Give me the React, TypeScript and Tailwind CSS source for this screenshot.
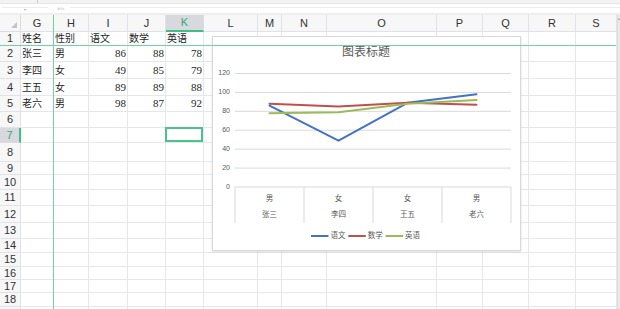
const cols = [
  { k: 'G', w: 'w-[33px]' },
  { k: 'H', w: 'w-[35px]' },
  { k: 'I', w: 'w-[39px]' },
  { k: 'J', w: 'w-[38px]' },
  { k: 'K', w: 'w-[38px]' },
  { k: 'L', w: 'w-[54px]' },
  { k: 'M', w: 'w-[24px]' },
  { k: 'N', w: 'w-[45px]' },
  { k: 'O', w: 'w-[110px]' },
  { k: 'P', w: 'w-[46px]' },
  { k: 'Q', w: 'w-[46px]' },
  { k: 'R', w: 'w-[47px]' },
  { k: 'S', w: 'w-[41px]' },
]

const rowHeights = [
  'h-[14px]', 'h-[16px]', 'h-[17px]', 'h-[17px]', 'h-[16px]', 'h-[16px]', 'h-[15px]', 'h-[19px]', 'h-[13px]',
  'h-[15px]', 'h-[16px]', 'h-[17px]', 'h-[16px]', 'h-[14px]', 'h-[14px]', 'h-[13px]', 'h-[13px]', 'h-[14px]', 'h-[14px]',
]

const sheet: Record<number, string[]> = {
  1: ['姓名', '性别', '语文', '数学', '英语'],
  2: ['张三', '男', '86', '88', '78'],
  3: ['李四', '女', '49', '85', '79'],
  4: ['王五', '女', '89', '89', '88'],
  5: ['老六', '男', '98', '87', '92'],
}

// chart data
const names = ['张三', '李四', '王五', '老六']
const genders = ['男', '女', '女', '男']
const series = [
  { name: '语文', color: '#4472C4', values: [86, 49, 89, 98] },
  { name: '数学', color: '#C0504D', values: [88, 85, 89, 87] },
  { name: '英语', color: '#9BBB59', values: [78, 79, 88, 92] },
]
const x0 = 23
const x1 = 299
const catW = (x1 - x0) / 4
const yOf = (v: number) => 151 - v * 0.9458

const Chart = () => {
  const ticks = [0, 20, 40, 60, 80, 100, 120]
  return (
    <div className="absolute left-[212px] top-[36px] w-[309px] h-[215px] border border-[#d9d9d9] bg-white shadow-[0_1px_2px_rgba(0,0,0,0.12)]">
      <svg
        width="307"
        height="213"
        viewBox="1 1 307 213"
        className="block font-['Liberation_Serif','Noto_Sans_CJK_SC',serif]"
      >
        <text x="154" y="17" fontSize="12" fill="#595959" textAnchor="middle" dominantBaseline="middle">
          图表标题
        </text>
        {ticks.map((t) => (
          <g key={t}>
            <line x1={x0} x2={x1} y1={yOf(t)} y2={yOf(t)} stroke="#d9d9d9" strokeWidth="1" />
            <text
              x="18"
              y={yOf(t)}
              fontSize="7"
              fill="#595959"
              textAnchor="end"
              dominantBaseline="middle"
              className="font-['Liberation_Sans',sans-serif]"
            >
              {t}
            </text>
          </g>
        ))}
        {[0, 1, 2, 3, 4].map((i) => (
          <line key={i} x1={x0 + i * catW} x2={x0 + i * catW} y1="151" y2="187" stroke="#d9d9d9" strokeWidth="1" />
        ))}
        {names.map((n, i) => (
          <g key={n}>
            <text x={x0 + catW * (i + 0.5)} y="163" fontSize="7.5" fill="#595959" textAnchor="middle" dominantBaseline="middle">
              {genders[i]}
            </text>
            <text x={x0 + catW * (i + 0.5)} y="179" fontSize="7.5" fill="#595959" textAnchor="middle" dominantBaseline="middle">
              {n}
            </text>
          </g>
        ))}
        {series.map((s) => (
          <polyline
            key={s.name}
            fill="none"
            stroke={s.color}
            strokeWidth="2"
            strokeLinejoin="round"
            strokeLinecap="round"
            points={s.values.map((v, i) => `${x0 + catW * (i + 0.5)},${yOf(v)}`).join(' ')}
          />
        ))}
        {series.map((s, i) => (
          <g key={s.name}>
            <line x1={99 + i * 37.3} x2={116.5 + i * 37.3} y1="200" y2="200" stroke={s.color} strokeWidth="2" />
            <text x={118.5 + i * 37.3} y="200" fontSize="7.5" fill="#595959" dominantBaseline="middle">
              {s.name}
            </text>
          </g>
        ))}
      </svg>
    </div>
  )
}

const App = () => {
  return (
    <div className="relative w-[620px] h-[309px] overflow-hidden bg-white font-['Liberation_Serif','Noto_Sans_CJK_SC',serif]">
      {/* formula bar */}
      <div className="h-[3px] bg-[#f3f3f3] flex">
        <div className="ml-[37px] w-px h-[3px] bg-[#cfcfcf]" />
      </div>
      <div className="h-[10px] bg-white border-t border-[#e6e6e6] flex items-center">
        <div className="ml-[2px] w-[46px] h-[6px] mt-[3px] border-t border-[#ececec] flex justify-center">
          <span className="text-[4px] leading-[4px] text-[#aaa]">▾</span>
        </div>
        <div className="ml-[9px] mt-[1px] text-[4px] leading-[4px] text-[#bbb] font-['Liberation_Sans',sans-serif]">
          ⊗ fx
        </div>
        <div className="ml-[6px] flex-1 h-[6px] mt-[3px] border-t border-[#ececec]" />
      </div>
      <div className="h-[2px] bg-[#eeeeee]" />

      <div className="flex">
        <div className="w-[617px]">
          {/* column headers */}
          <div className="flex h-[17px] font-['Liberation_Sans','Noto_Sans',sans-serif] text-[11px] text-[#333]">
            <div className="w-[21px] h-full bg-[#f7f7f8] border-r border-b border-[#dcdde2] flex items-end justify-end pr-[3px] pb-[3px]">
              <div className="w-0 h-0 border-l-[6px] border-l-transparent border-b-[6px] border-b-[#c4c4c4]" />
            </div>
            {cols.map((c) =>
              c.k === 'K' ? (
                <div
                  key={c.k}
                  className={`${c.w} h-full bg-[#d7d9de] border-r border-[#dcdde2] border-b-2 border-b-[#3fbf85] flex items-center justify-center text-[#2fae73]`}
                >
                  {c.k}
                </div>
              ) : (
                <div
                  key={c.k}
                  className={`${c.w} h-full bg-[#f7f7f8] border-r border-b border-[#e1e2e7] flex items-center justify-center`}
                >
                  {c.k}
                </div>
              ),
            )}
          </div>

          {rowHeights.map((h, r) => {
            const row = r + 1
            const values = sheet[row] || []
            return (
              <div key={row} className={`flex ${h}`}>
                {row === 7 ? (
                  <div className="w-[21px] h-full bg-[#d7d9de] border-r-2 border-r-[#3fbf85] border-b border-[#dcdde2] flex items-center justify-center text-[11px] text-[#2fae73] font-['Liberation_Sans',sans-serif]">
                    {row}
                  </div>
                ) : (
                  <div className="w-[21px] h-full bg-[#f7f7f8] border-r border-b border-[#e1e2e7] flex items-center justify-center text-[11px] text-[#333] font-['Liberation_Sans',sans-serif]">
                    {row < 19 ? row : ''}
                  </div>
                )}
                {cols.map((c, ci) => {
                  const v = values[ci]
                  const isNum = v !== undefined && /^\d+$/.test(v)
                  return (
                    <div
                      key={c.k}
                      className={`${c.w} relative h-full border-r border-b border-[#e6e7ed] flex items-center text-[10px] text-[#1f1f1f] ${
                        isNum ? 'justify-end pr-[1px] text-[11px]' : 'pl-[1px]'
                      }`}
                    >
                      {v}
                      {row === 7 && c.k === 'K' && (
                        <div className="absolute left-[-1px] top-[-1px] right-0 bottom-0 border-2 border-[#4cc38a]" />
                      )}
                    </div>
                  )
                })}
              </div>
            )
          })}
        </div>
        <div className="w-[3px] bg-[#e9e9ea] border-l border-[#dddddd] flex justify-center">
          <span className="text-[4px] leading-[8px] text-[#999]">▴</span>
        </div>
      </div>

      <Chart />

      {/* frozen pane lines */}
      <div className="absolute left-0 w-[616px] top-[45px] h-px bg-[#6fd3a5]" />
      <div className="absolute left-[53px] top-[15px] bottom-0 w-px bg-[#6fd3a5]" />
    </div>
  )
}

export default App
